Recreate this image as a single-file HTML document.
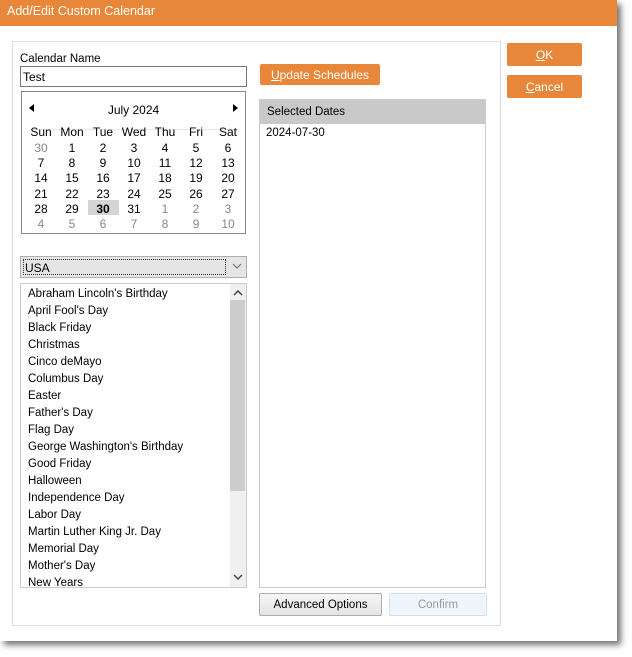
<!DOCTYPE html>
<html><head><meta charset="utf-8"><style>
*{margin:0;padding:0;box-sizing:border-box}
body{width:632px;height:657px;background:#fff;position:relative;overflow:hidden;font-family:"Liberation Sans",sans-serif;font-size:11.5px;color:#000}
.a{position:absolute}
.win{left:0;top:0;width:617px;height:641px;background:#fff;box-shadow:4px 4px 6px rgba(0,0,0,.55)}
.title{left:0;top:0;width:617px;height:26px;background:#E8873A;color:#fff;font-size:12.5px;padding:4px 0 0 7px}
.btn{background:#E8873A;color:#fff;border-radius:2px;text-align:center;font-size:12px}
.cal span{position:absolute;width:30px;text-align:center}
.g{color:#888}
.li{left:28px;font-size:11.5px}
</style></head><body>
<div class="a win"></div>
<div class="a title">Add/Edit Custom Calendar</div>
<div class="a" style="left:12px;top:41px;width:489px;height:585px;border:1px solid #ddd"></div>
<div class="a" style="left:20px;top:53px">Calendar Name</div>
<div class="a" style="left:20px;top:66px;width:227px;height:21px;border:1px solid #777;padding:3px 0 0 2px;font-size:12px">Test</div>
<div class="a cal" style="left:21px;top:91px;width:225px;height:143px;border:1px solid #888">
<div class="a" style="left:7px;top:12px;width:0;height:0;border-top:4px solid transparent;border-bottom:4px solid transparent;border-right:5px solid #000"></div>
<div class="a" style="left:211px;top:12px;width:0;height:0;border-top:4px solid transparent;border-bottom:4px solid transparent;border-left:5px solid #000"></div>
<div class="a" style="left:0;top:11px;width:223px;text-align:center;font-size:12px">July 2024</div>
<div class="a" style="left:9px;top:37px;width:208px;height:1px;background:#e6e6e6"></div>
<div class="a" style="left:66px;top:108px;width:31px;height:15px;background:#d4d4d4"></div>
<div id="c"></div>
</div>
<div class="a btn" style="left:260px;top:64px;width:120px;height:21px;padding-top:4px"><u>U</u>pdate Schedules</div>
<div class="a" style="left:259px;top:99px;width:227px;height:489px;border:1px solid #ccc"></div>
<div class="a" style="left:260px;top:100px;width:225px;height:24px;background:#c9c9c9;padding:6px 0 0 7px">Selected Dates</div>
<div class="a" style="left:266px;top:127px">2024-07-30</div>
<div class="a btn" style="left:507px;top:43px;width:75px;height:23px;padding-top:5px"><u>O</u>K</div>
<div class="a btn" style="left:507px;top:75px;width:75px;height:23px;padding-top:5px"><u>C</u>ancel</div>
<div class="a" style="left:20px;top:256px;width:227px;height:22px;border:1px solid #adadad;background:#e5e5e5"></div>
<div class="a" style="left:23px;top:259px;width:203px;height:16px;border:1px dotted #333;padding:1px 0 0 1px;font-size:12px">USA</div>
<svg class="a" style="left:232px;top:263px" width="10" height="6"><path d="M1 1L5 5L9 1" fill="none" stroke="#777" stroke-width="1.2"/></svg>
<div class="a" style="left:20px;top:283px;width:227px;height:305px;border:1px solid #ccc"></div>
<div class="a" style="left:230px;top:284px;width:16px;height:303px;background:#f0f0f0"></div>
<div class="a" style="left:230px;top:300px;width:15px;height:191px;background:#cdcdcd"></div>
<svg class="a" style="left:233px;top:290px" width="10" height="6"><path d="M1 5L5 1L9 5" fill="none" stroke="#444" stroke-width="1.5"/></svg>
<svg class="a" style="left:233px;top:574px" width="10" height="6"><path d="M1 1L5 5L9 1" fill="none" stroke="#444" stroke-width="1.5"/></svg>
<div id="l"></div>
<div class="a" style="left:259px;top:593px;width:123px;height:23px;border:1px solid #adadad;border-radius:2px;background:linear-gradient(#f6f6f6,#e4e4e4);text-align:center;padding-top:5px">Advanced Options</div>
<div class="a" style="left:389px;top:593px;width:98px;height:23px;border:1px solid #cfe0f0;border-radius:2px;background:#f0f5fb;color:#999;text-align:center;padding-top:5px">Confirm</div>
<script>
var c='',cx=[4,35,66,97,128,159,191];
['Sun','Mon','Tue','Wed','Thu','Fri','Sat'].forEach(function(d,i){c+='<span style="left:'+cx[i]+'px;top:33px;font-size:12px">'+d+'</span>'});
var d=30,m=0;
for(var r=0;r<6;r++)for(var i=0;i<7;i++){var cls=(m!=1)?'g':'';var b=(m==1&&d==30)?';font-weight:bold':'';c+='<span class="'+cls+'" style="left:'+cx[i]+'px;top:'+(49+r*15.2)+'px;font-size:12px'+b+'">'+d+'</span>';d++;if(m==0&&d>30){d=1;m=1}else if(m==1&&d>31){d=1;m=2}}
document.getElementById('c').innerHTML=c;
var L=["Abraham Lincoln's Birthday","April Fool's Day","Black Friday","Christmas","Cinco deMayo","Columbus Day","Easter","Father's Day","Flag Day","George Washington's Birthday","Good Friday","Halloween","Independence Day","Labor Day","Martin Luther King Jr. Day","Memorial Day","Mother's Day","New Years"],h='';
L.forEach(function(t,i){h+='<div class="a li" style="top:'+(288+i*17)+'px">'+t+'</div>'});
document.getElementById('l').innerHTML=h;
</script>
</body></html>
